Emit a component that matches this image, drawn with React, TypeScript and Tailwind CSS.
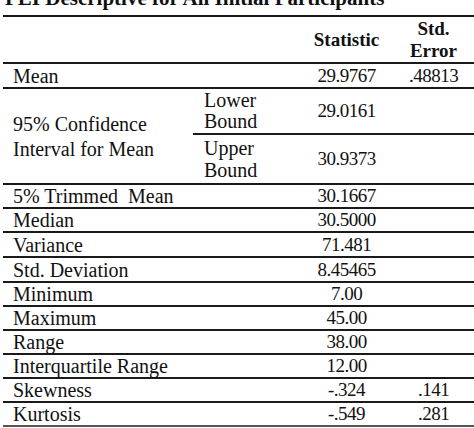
const serif = { fontFamily: '"Liberation Serif", "Times New Roman", serif' };

type Row = { label: string; stat: string; err?: string; h: string };

const rows: Row[] = [
  { label: '5% Trimmed\u00a0 Mean', stat: '30.1667', h: 'h-[24px]' },
  { label: 'Median', stat: '30.5000', h: 'h-[24px]' },
  { label: 'Variance', stat: '71.481', h: 'h-[25px]' },
  { label: 'Std. Deviation', stat: '8.45465', h: 'h-[25px]' },
  { label: 'Minimum', stat: '7.00', h: 'h-[24px]' },
  { label: 'Maximum', stat: '45.00', h: 'h-[24px]' },
  { label: 'Range', stat: '38.00', h: 'h-[24px]' },
  { label: 'Interquartile Range', stat: '12.00', h: 'h-[24px]' },
  { label: 'Skewness', stat: '-.324', err: '.141', h: 'h-[24px]' },
  { label: 'Kurtosis', stat: '-.549', err: '.281', h: 'h-[24px]' },
];

function Num({ children, w }: { children?: string; w: string }) {
  return (
    <div className={`${w} flex items-center justify-center text-[19px] tracking-[-0.5px]`}>
      {children}
    </div>
  );
}

export default function App() {
  return (
    <div className="h-[428px] w-[474px] overflow-hidden bg-white text-[#111]" style={serif}>
      <div className="-mt-[12px] h-[20px] pl-[5px] text-[21px] font-bold leading-[20px] whitespace-nowrap">
        PEI Descriptive for All Initial Participants
      </div>

      <div className="ml-[3px] mt-[7px] border-t-2 border-[#1a1a1a] text-[20px] leading-[22px]">
        {/* header */}
        <div className="flex h-[47px] border-b-2 border-[#1a1a1a] font-bold">
          <div className="w-[297px]" />
          <div className="flex w-[93px] items-center justify-center pt-[1px] text-[19px]">Statistic</div>
          <div className="flex w-[81px] flex-col items-center justify-center text-[19px] leading-[22px]">
            <span>Std.</span>
            <span>Error</span>
          </div>
        </div>

        {/* mean */}
        <div className="flex h-[25px] border-b-2 border-[#1a1a1a]">
          <div className="flex w-[297px] items-center pl-[10px]">Mean</div>
          <Num w="w-[93px]">29.9767</Num>
          <Num w="w-[81px]">.48813</Num>
        </div>

        {/* confidence interval */}
        <div className="flex border-b-2 border-[#1a1a1a]">
          <div className="flex w-[190px] flex-col justify-center pl-[10px] pt-[2px] leading-[25px]">
            <span>95% Confidence</span>
            <span>Interval for Mean</span>
          </div>
          <div className="flex flex-col">
            <div className="flex h-[46px] border-b-2 border-[#1a1a1a]">
              <div className="flex w-[107px] flex-col justify-center pl-[11px] leading-[21px]">
                <span>Lower</span>
                <span>Bound</span>
              </div>
              <Num w="w-[93px]">29.0161</Num>
              <Num w="w-[81px]" />
            </div>
            <div className="flex h-[48px]">
              <div className="flex w-[107px] flex-col justify-center pl-[11px] leading-[22px]">
                <span>Upper</span>
                <span>Bound</span>
              </div>
              <Num w="w-[93px]">30.9373</Num>
              <Num w="w-[81px]" />
            </div>
          </div>
        </div>

        {rows.map((r, i) => (
          <div
            key={r.label}
            className={`flex border-b-2 ${r.h} ${i === rows.length - 1 ? 'border-[#555]' : 'border-[#1a1a1a]'}`}
          >
            <div className="flex w-[297px] items-center whitespace-pre pl-[10px]">{r.label}</div>
            <Num w="w-[93px]">{r.stat}</Num>
            <Num w="w-[81px]">{r.err}</Num>
          </div>
        ))}
      </div>
    </div>
  );
}
